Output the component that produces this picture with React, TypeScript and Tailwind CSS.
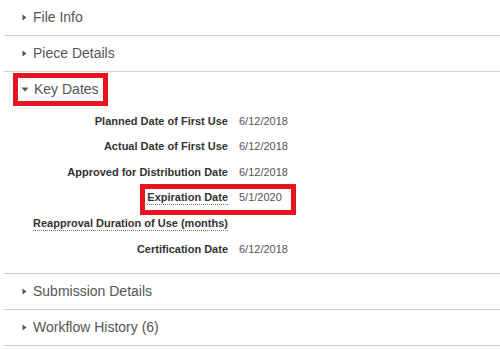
import React from "react";

const font = { fontFamily: '"Liberation Sans", Arial, sans-serif' };

const Caret = ({ open }: { open?: boolean }) =>
  open ? (
    <svg width="8" height="5" viewBox="0 0 8 5" className="shrink-0">
      <polygon points="0.5,0.5 7.5,0.5 4,4.5" fill="#555" />
    </svg>
  ) : (
    <svg width="5" height="7" viewBox="0 0 5 7" className="shrink-0">
      <polygon points="0.5,0.5 4.5,3.5 0.5,6.5" fill="#555" />
    </svg>
  );

const SectionHeader = ({ title }: { title: string }) => (
  <div className="flex items-center h-[35px] pl-[18px] gap-[6px] text-[14px] text-[#555]">
    <Caret />
    <span>{title}</span>
  </div>
);

const rows: { label: string; value: string; dotted?: boolean; boxed?: boolean }[] = [
  { label: "Planned Date of First Use", value: "6/12/2018" },
  { label: "Actual Date of First Use", value: "6/12/2018" },
  { label: "Approved for Distribution Date", value: "6/12/2018" },
  { label: "Expiration Date", value: "5/1/2020", dotted: true, boxed: true },
  { label: "Reapproval Duration of Use (months)", value: "", dotted: true },
  { label: "Certification Date", value: "6/12/2018" },
];

export default function App() {
  return (
    <div className="w-[500px] h-[349px] bg-white pl-[4px] overflow-hidden" style={font}>
      <div className="border-b border-[#d0d0d0]">
        <SectionHeader title="File Info" />
      </div>
      <div className="border-b border-[#d0d0d0]">
        <SectionHeader title="Piece Details" />
      </div>

      {/* Key Dates - expanded */}
      <div className="border-b border-[#d0d0d0] pb-[11px]">
        <div className="flex items-center h-[35px] pl-[9px]">
          <div className="flex items-center h-[33px] border-[5px] border-[#e8141e] pl-[3px] pr-[4px] gap-[5px] text-[14px] text-[#555]">
            <Caret open />
            <span>Key Dates</span>
          </div>
        </div>
        <div className="pt-px">
          {rows.map((r) => (
            <div key={r.label} className="relative grid grid-cols-[224px_1fr] gap-x-[11px] h-[25.6px] items-center text-[11px]">
              <div className="text-right">
                <span
                  className={
                    "font-bold text-[#333] " +
                    (r.dotted ? "border-b border-dotted border-[#777] pb-px" : "")
                  }
                >
                  {r.label}
                </span>
              </div>
              <div className="text-[#555]">{r.value}</div>
              {r.boxed && (
                <div className="absolute left-[136px] top-[-1px] w-[156px] h-[31px] border-[5px] border-[#e8141e] pointer-events-none" />
              )}
            </div>
          ))}
        </div>
      </div>

      <div className="border-b border-[#d0d0d0]">
        <SectionHeader title="Submission Details" />
      </div>
      <div className="border-b border-[#d0d0d0]">
        <SectionHeader title="Workflow History (6)" />
      </div>
    </div>
  );
}
